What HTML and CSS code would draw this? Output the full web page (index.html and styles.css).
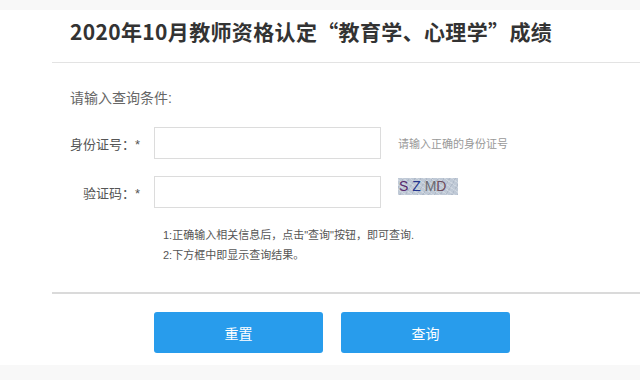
FILE: index.html
```html
<!DOCTYPE html>
<html lang="zh-CN">
<head>
    <meta charset="UTF-8">
    <meta name="viewport" content="width=device-width, initial-scale=1.0">
    <title>成绩查询</title>
    <link rel="stylesheet" href="styles.css">
</head>
<body>

<div class="top-bar"></div>

<div class="page">
    <div class="header">
        <h1>2020年10月教师资格认定“教育学、心理学”成绩</h1>
    </div>

    <form class="query-form" id="queryForm">
        <p class="form-tip">请输入查询条件:</p>

        <div class="form-row">
            <label for="idcard">身份证号：*</label>
            <input type="text" id="idcard" name="idcard">
            <span class="hint">请输入正确的身份证号</span>
        </div>

        <div class="form-row">
            <label for="code">验证码：*</label>
            <input type="text" id="code" name="code">
            <span class="captcha">
                <span class="c1">S</span>
                <span class="c2">Z</span>
                <span class="c3">M</span><span class="c4">D</span>
            </span>
        </div>

        <div class="notes">
            <p>1:正确输入相关信息后，点击"查询"按钮，即可查询.</p>
            <p>2:下方框中即显示查询结果。</p>
        </div>

        <div class="btn-bar">
            <button type="reset" class="btn">重置</button>
            <button type="submit" class="btn">查询</button>
        </div>
    </form>
</div>

<div class="bottom-bar"></div>

</body>
</html>
```

FILE: styles.css
```css
/* 全局样式 */
* {
    margin: 0;
    padding: 0;
    box-sizing: border-box;
}

body {
    background: #fff;
    font-family: "Liberation Sans", "Noto Sans CJK SC", sans-serif;
    color: #555;
    height: 380px;
    overflow: hidden;
}

.top-bar {
    height: 10px;
    background: #f8f8f8;
}

.bottom-bar {
    height: 20px;
    background: #f8f8f8;
}

/* 页面主体 */
.page {
    margin-left: 52px;
}

.header {
    height: 53px;
    padding-left: 18px;
    display: flex;
    align-items: center;
    border-bottom: 1px solid #e3e3e3;
}

.header h1 {
    font-family: "Noto Sans CJK SC", sans-serif;
    font-size: 21px;
    font-weight: bold;
    color: #333;
    letter-spacing: 0.35px;
    margin-top: -11px;
}

/* 表单 */
.form-tip {
    padding: 24px 0 0 18px;
    height: 64px;
    font-size: 14px;
    color: #666;
}

.form-row {
    display: flex;
    align-items: center;
    margin-bottom: 17px;
}

.form-row label {
    width: 88px;
    text-align: right;
    font-size: 13px;
    color: #555;
    margin-right: 14px;
}

.form-row input {
    width: 227px;
    height: 32px;
    border: 1px solid #dcdcdc;
    outline: none;
    padding: 0 8px;
    font-size: 13px;
}

.hint {
    margin-left: 17px;
    font-size: 11px;
    color: #999;
}

.captcha {
    margin-left: 17px;
    align-self: flex-start;
    margin-top: 2px;
    width: 60px;
    height: 17px;
    line-height: 17px;
    font-size: 14px;
    padding-left: 1px;
    background-color: #bfc9d6;
    background-image:
        repeating-linear-gradient(35deg, rgba(255, 255, 255, 0.25) 0 1px, transparent 1px 4px),
        repeating-linear-gradient(-60deg, rgba(120, 130, 150, 0.2) 0 1px, transparent 1px 5px);
}

.c1 { color: #5b2a6e; }
.c2 { color: #24368f; }
.c3 { color: #6b6b72; }
.c4 { color: #6e4c5c; }

.notes {
    margin: 2px 0 0 111px;
    font-size: 11px;
    color: #555;
    line-height: 20px;
    height: 67px;
}

/* 按钮 */
.btn-bar {
    border-top: 2px solid #dadada;
    padding: 18px 0 12px 102px;
    display: flex;
    gap: 18px;
}

.btn {
    width: 169px;
    height: 41px;
    background-color: #289cec;
    border: none;
    border-radius: 3px;
    color: #fff;
    font-size: 14px;
    font-family: "Liberation Sans", "Noto Sans CJK SC", sans-serif;
    cursor: pointer;
}
```
